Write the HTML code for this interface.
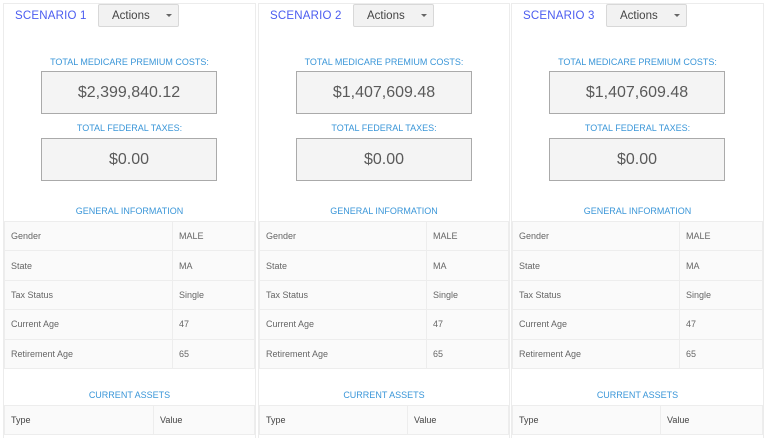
<!DOCTYPE html>
<html><head><meta charset="utf-8"><style>
*{box-sizing:border-box;margin:0;padding:0}
html,body{width:768px;height:438px;overflow:hidden}
body{background:#fff;font-family:"Liberation Sans",sans-serif;position:relative}
.col{position:absolute;top:3px;height:435px;border:1px solid #ececec;border-bottom:none;background:#fff;overflow:hidden}
.title{position:absolute;left:11px;top:6px;font-size:11.5px;color:#4b5cf0;letter-spacing:0.2px}
.btn{position:absolute;left:94px;top:0;width:81px;height:23px;background:#f2f2f2;border:1px solid #d8d8d8;border-radius:2px;font-size:11.5px;color:#444;padding:5px 0 0 13px}
.btn:after{content:"";position:absolute;left:67px;top:9px;border-left:3px solid transparent;border-right:3px solid transparent;border-top:3px solid #666}
.lbl{position:absolute;left:0;right:0;text-align:center;font-size:9px;color:#3a96d8}
.box{position:absolute;left:37px;width:176px;height:43px;background:#f4f4f4;border:1px solid #aaa;text-align:center;font-size:16px;color:#5a5a5a;line-height:41px}
table{position:absolute;left:0;width:100%;border-collapse:collapse;font-size:9px;color:#666}
td{height:29.4px;border:1px solid #ededed;background:#fafafa;padding-left:6px}
.t2 td{background:#fafafa;color:#444}
</style></head><body>
<div class="col" style="left:3px;width:253px">
<div class="title">SCENARIO 1</div><div class="btn">Actions</div>
<div class="lbl" style="top:53px">TOTAL MEDICARE PREMIUM COSTS:</div>
<div class="box" style="top:67px">$2,399,840.12</div>
<div class="lbl" style="top:119px">TOTAL FEDERAL TAXES:</div>
<div class="box" style="top:134px">$0.00</div>
<div class="lbl" style="top:202px">GENERAL INFORMATION</div>
<table style="top:217px"><tr><td style="width:168px">Gender</td><td>MALE</td></tr><tr><td>State</td><td>MA</td></tr><tr><td>Tax Status</td><td>Single</td></tr><tr><td>Current Age</td><td>47</td></tr><tr><td>Retirement Age</td><td>65</td></tr></table>
<div class="lbl" style="top:386px">CURRENT ASSETS</div>
<table class="t2" style="top:401px"><tr><td style="width:149px">Type</td><td>Value</td></tr></table>
</div>
<div class="col" style="left:258px;width:252px">
<div class="title">SCENARIO 2</div><div class="btn">Actions</div>
<div class="lbl" style="top:53px">TOTAL MEDICARE PREMIUM COSTS:</div>
<div class="box" style="top:67px">$1,407,609.48</div>
<div class="lbl" style="top:119px">TOTAL FEDERAL TAXES:</div>
<div class="box" style="top:134px">$0.00</div>
<div class="lbl" style="top:202px">GENERAL INFORMATION</div>
<table style="top:217px"><tr><td style="width:167px">Gender</td><td>MALE</td></tr><tr><td>State</td><td>MA</td></tr><tr><td>Tax Status</td><td>Single</td></tr><tr><td>Current Age</td><td>47</td></tr><tr><td>Retirement Age</td><td>65</td></tr></table>
<div class="lbl" style="top:386px">CURRENT ASSETS</div>
<table class="t2" style="top:401px"><tr><td style="width:148px">Type</td><td>Value</td></tr></table>
</div>
<div class="col" style="left:511px;width:253px">
<div class="title">SCENARIO 3</div><div class="btn">Actions</div>
<div class="lbl" style="top:53px">TOTAL MEDICARE PREMIUM COSTS:</div>
<div class="box" style="top:67px">$1,407,609.48</div>
<div class="lbl" style="top:119px">TOTAL FEDERAL TAXES:</div>
<div class="box" style="top:134px">$0.00</div>
<div class="lbl" style="top:202px">GENERAL INFORMATION</div>
<table style="top:217px"><tr><td style="width:167px">Gender</td><td>MALE</td></tr><tr><td>State</td><td>MA</td></tr><tr><td>Tax Status</td><td>Single</td></tr><tr><td>Current Age</td><td>47</td></tr><tr><td>Retirement Age</td><td>65</td></tr></table>
<div class="lbl" style="top:386px">CURRENT ASSETS</div>
<table class="t2" style="top:401px"><tr><td style="width:148px">Type</td><td>Value</td></tr></table>
</div>
</body></html>
